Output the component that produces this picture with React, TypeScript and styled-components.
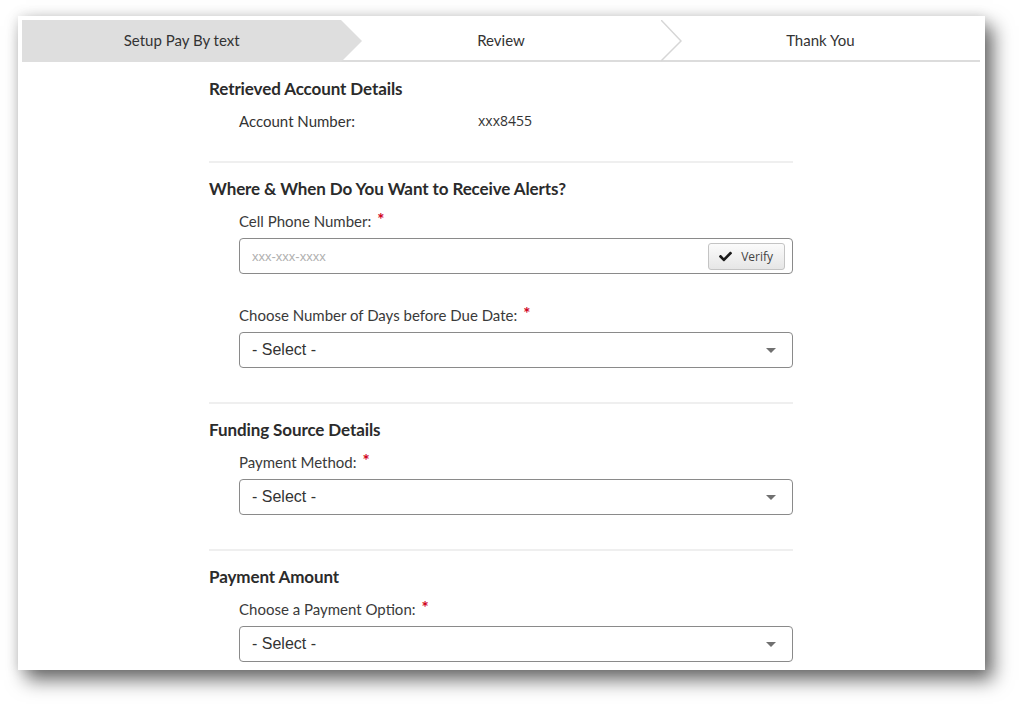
import React from "react";
import styled, { createGlobalStyle } from "styled-components";
import { FaCheck } from "react-icons/fa";

const Global = createGlobalStyle`
  html, body { margin: 0; padding: 0; background: #fff; }
  body { font-family: Lato, "Open Sans", sans-serif; color: #333; }
  * { box-sizing: border-box; }
`;

const Page = styled.div`
  width: 1019px;
  height: 704px;
  padding: 16px 0 0 18px;
  overflow: hidden;
`;

const Card = styled.div`
  width: 967px;
  height: 654px;
  background: #fff;
  padding: 4px 5px 0 4px;
  overflow: hidden;
  box-shadow: 8px 10px 18px rgba(0, 0, 0, 0.58), 0 0 12px rgba(0, 0, 0, 0.12);
`;

const StepBar = styled.div`
  display: flex;
  height: 42px;
  border-bottom: 2px solid #dcdcdc;
`;

const Step = styled.div<{ $active?: boolean }>`
  position: relative;
  flex: 1;
  height: ${(p) => (p.$active ? "42px" : "40px")};
  display: flex;
  align-items: center;
  justify-content: center;
  background: ${(p) => (p.$active ? "#dedede" : "transparent")};
  font-size: 15px;
  color: #333;
  padding-bottom: ${(p) => (p.$active ? "2px" : "0")};
  z-index: ${(p) => (p.$active ? 2 : 1)};
`;

const Arrow = styled.svg`
  position: absolute;
  top: 0;
  right: -21px;
  width: 21px;
  height: 42px;
`;

const Content = styled.div`
  width: 584px;
  margin: 0 auto;
`;

const Section = styled.section<{ $top?: number; $bottom?: number; $last?: boolean }>`
  padding-top: ${(p) => p.$top ?? 15}px;
  padding-bottom: ${(p) => p.$bottom ?? 34}px;
  border-bottom: ${(p) => (p.$last ? "none" : "2px solid #efefef")};
`;

const Heading = styled.h2`
  margin: 0 0 11px 0;
  font-size: 17px;
  line-height: 22px;
  font-weight: 700;
  color: #2b2b2b;
  letter-spacing: -0.1px;
`;

const Fields = styled.div`
  display: flex;
  flex-direction: column;
  gap: 31px;
  padding-left: 30px;
`;

const InfoRow = styled.div`
  display: grid;
  grid-template-columns: 239px auto;
  padding-left: 30px;
  font-size: 15px;
  line-height: 20px;
  color: #333;
`;

const Value = styled.span`
  font-family: "Open Sans", Lato, sans-serif;
  font-size: 14px;
`;

const Field = styled.div`
  display: flex;
  flex-direction: column;
  gap: 7px;
`;

const Label = styled.label`
  font-size: 15px;
  line-height: 20px;
  color: #3a3a3a;
`;

const Req = styled.span`
  color: #d0021b;
  font-weight: 700;
  font-size: 17px;
  margin-left: 6px;
  position: relative;
  top: -1px;
`;

const InputBox = styled.div`
  display: flex;
  align-items: center;
  height: 36px;
  border: 1px solid #8a8a8a;
  border-radius: 4px;
  padding: 0 7px 0 12px;
  background: #fff;
`;

const TextInput = styled.input`
  flex: 1;
  border: none;
  outline: none;
  background: transparent;
  font-family: "Liberation Sans", Arial, sans-serif;
  font-size: 13px;
  color: #333;
  padding: 0;
  &::placeholder {
    color: #b0b0b0;
  }
`;

const VerifyButton = styled.button`
  display: flex;
  align-items: center;
  gap: 9px;
  height: 27px;
  padding: 0 11px 0 10px;
  border: 1px solid #c4c4c4;
  border-radius: 3px;
  background: linear-gradient(#fbfbfb, #e6e6e6);
  font-family: "Open Sans", sans-serif;
  font-size: 12px;
  color: #444;
  svg {
    color: #1a1a1a;
  }
`;

const SelectBox = styled.div`
  display: flex;
  align-items: center;
  justify-content: space-between;
  height: 36px;
  border: 1px solid #8a8a8a;
  border-radius: 4px;
  padding: 0 16px 0 12px;
  font-family: "Liberation Sans", Arial, sans-serif;
  font-size: 16px;
  color: #333;
`;

const Caret = styled.span`
  width: 0;
  height: 0;
  border-left: 5px solid transparent;
  border-right: 5px solid transparent;
  border-top: 5px solid #707070;
`;

const Select: React.FC = () => (
  <SelectBox>
    <span>- Select -</span>
    <Caret />
  </SelectBox>
);

export default function App() {
  return (
    <Page>
      <Global />
      <Card>
        <StepBar>
          <Step $active>
            Setup Pay By text
            <Arrow viewBox="0 0 21 42">
              <polygon points="0,0 21,21 0,42" fill="#dedede" />
            </Arrow>
          </Step>
          <Step>
            Review
            <Arrow viewBox="0 0 21 42">
              <polyline points="0,0 20,21 0,41" fill="none" stroke="#d6d6d6" strokeWidth="1.5" />
            </Arrow>
          </Step>
          <Step>Thank You</Step>
        </StepBar>
        <Content>
          <Section $top={16} $bottom={30}>
            <Heading>Retrieved Account Details</Heading>
            <InfoRow>
              <span>Account Number:</span>
              <Value>xxx8455</Value>
            </InfoRow>
          </Section>
          <Section>
            <Heading>Where &amp; When Do You Want to Receive Alerts?</Heading>
            <Fields>
              <Field>
                <Label>
                  Cell Phone Number:<Req>*</Req>
                </Label>
                <InputBox>
                  <TextInput placeholder="xxx-xxx-xxxx" />
                  <VerifyButton>
                    <FaCheck size={13} />
                    Verify
                  </VerifyButton>
                </InputBox>
              </Field>
              <Field>
                <Label>
                  Choose Number of Days before Due Date:<Req>*</Req>
                </Label>
                <Select />
              </Field>
            </Fields>
          </Section>
          <Section>
            <Heading>Funding Source Details</Heading>
            <Fields>
              <Field>
                <Label>
                  Payment Method:<Req>*</Req>
                </Label>
                <Select />
              </Field>
            </Fields>
          </Section>
          <Section $last>
            <Heading>Payment Amount</Heading>
            <Fields>
              <Field>
                <Label>
                  Choose a Payment Option:<Req>*</Req>
                </Label>
                <Select />
              </Field>
            </Fields>
          </Section>
        </Content>
      </Card>
    </Page>
  );
}
